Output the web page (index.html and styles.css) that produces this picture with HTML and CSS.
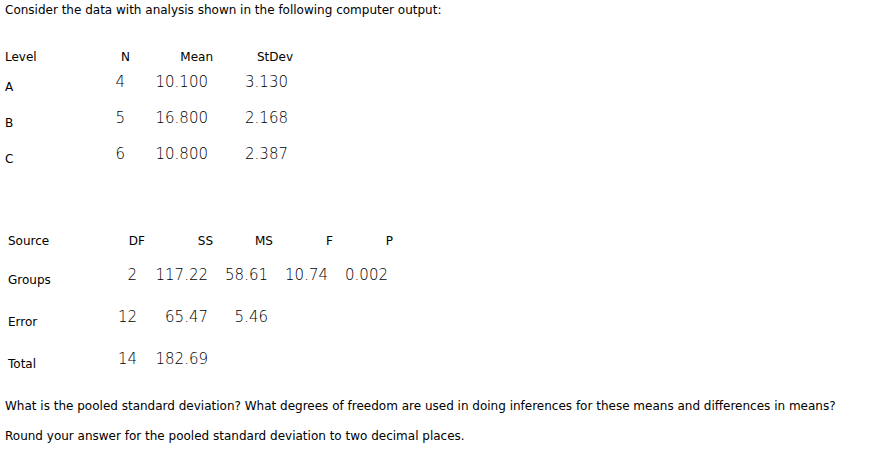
FILE: index.html
```html
<!DOCTYPE html>
<html>
<head>
<meta charset="utf-8">
<link rel="stylesheet" href="styles.css">
</head>
<body>
<p class="line title">Consider the data with analysis shown in the following computer output:</p>

<div class="t1">
  <div class="row head">
    <span class="lab">Level</span><span class="c n">N</span><span class="c mean">Mean</span><span class="c sd">StDev</span>
  </div>
  <div class="row data">
    <span class="lab">A</span><span class="c n num">4</span><span class="c mean num">10.100</span><span class="c sd num">3.130</span>
  </div>
  <div class="row data">
    <span class="lab">B</span><span class="c n num">5</span><span class="c mean num">16.800</span><span class="c sd num">2.168</span>
  </div>
  <div class="row data">
    <span class="lab">C</span><span class="c n num">6</span><span class="c mean num">10.800</span><span class="c sd num">2.387</span>
  </div>
</div>

<div class="t2">
  <div class="row head">
    <span class="lab">Source</span><span class="c df">DF</span><span class="c ss">SS</span><span class="c ms">MS</span><span class="c f">F</span><span class="c p">P</span>
  </div>
  <div class="row data">
    <span class="lab">Groups</span><span class="c df num">2</span><span class="c ss num">117.22</span><span class="c ms num">58.61</span><span class="c f num">10.74</span><span class="c p num">0.002</span>
  </div>
  <div class="row data">
    <span class="lab">Error</span><span class="c df num">12</span><span class="c ss num">65.47</span><span class="c ms num">5.46</span><span class="c f num"></span><span class="c p num"></span>
  </div>
  <div class="row data">
    <span class="lab">Total</span><span class="c df num">14</span><span class="c ss num">182.69</span><span class="c ms num"></span><span class="c f num"></span><span class="c p num"></span>
  </div>
</div>

<p class="line q1">What is the pooled standard deviation? What degrees of freedom are used in doing inferences for these means and differences in means?</p>
<p class="line q2">Round your answer for the pooled standard deviation to two decimal places.</p>
</body>
</html>
```
FILE: styles.css
```css
html, body {
  margin: 0;
  padding: 0;
  background: #fff;
  color: #000;
}
body {
  font-family: "DejaVu Sans", Verdana, sans-serif;
  font-size: 12px;
}
.line {
  margin: 0;
  padding-left: 5px;
  line-height: 20px;
  white-space: nowrap;
}
.row {
  display: flex;
  align-items: flex-start;
}
.head {
  height: 20px;
  line-height: 20px;
}
.c {
  text-align: right;
  flex: none;
}
.num {
  font-size: 15px;
  font-weight: 200;
  line-height: 20px;
  padding-right: 5px;
  box-sizing: border-box;
}
.lab {
  flex: none;
  line-height: 20px;
}

/* table 1 */
.t1 {
  margin-top: 27px;
  padding-left: 5px;
}
.t1 .lab { width: 95px; }
.t1 .n { width: 30px; }
.t1 .mean { width: 83px; }
.t1 .sd { width: 80px; }
.t1 .data { height: 36px; }
.t1 .data .num { padding-top: 5px; }
.t1 .data .lab { padding-top: 10px; }

/* table 2 */
.t2 {
  margin-top: 56px;
  padding-left: 8px;
}
.t2 .lab { width: 92px; }
.t2 .df { width: 45px; }
.t2 .ss { width: 68px; }
.t2 .ms { width: 60px; }
.t2 .f { width: 60px; }
.t2 .p { width: 60px; }
.t2 .data { height: 42px; }
.t2 .data .num { padding-top: 14px; }
.t2 .data .lab { padding-top: 19px; }
.t2 .df.num { padding-right: 8px; }

.q1 { margin-top: 19px; }
.q2 { margin-top: 10px; }
```
